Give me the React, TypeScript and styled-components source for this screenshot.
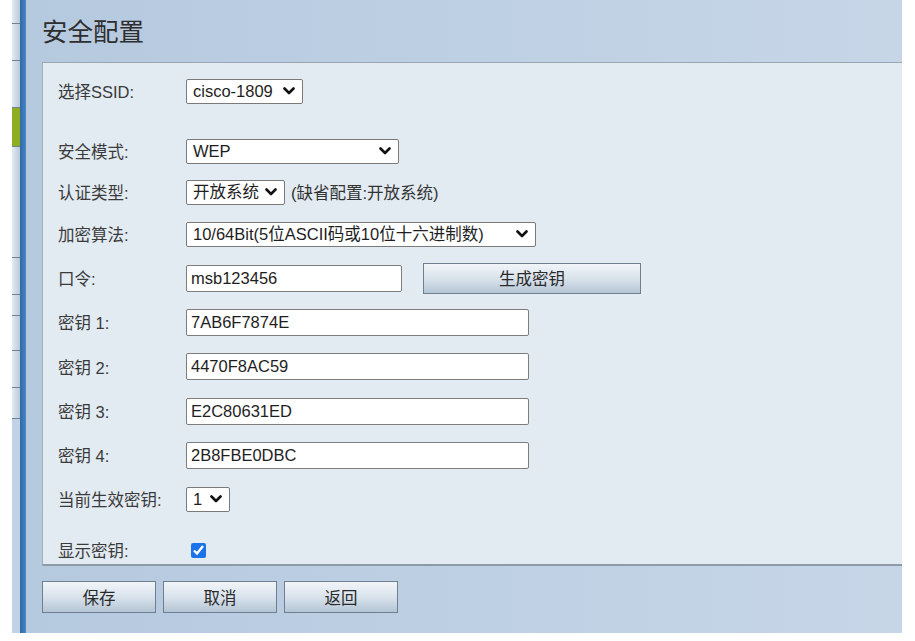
import styled, { createGlobalStyle } from "styled-components"

const GlobalStyle = createGlobalStyle`
  html, body {
    margin: 0;
    padding: 0;
    background: #ffffff;
  }
  body {
    font-family: "Liberation Sans", "Noto Sans CJK SC", sans-serif;
    color: #333333;
  }
`

const chevron = encodeURIComponent(
  `<svg xmlns="http://www.w3.org/2000/svg" width="12" height="8" viewBox="0 0 12 8"><path d="M1.5 1.5 L6 6 L10.5 1.5" fill="none" stroke="#111" stroke-width="2.6" stroke-linecap="round" stroke-linejoin="round"/></svg>`
)

const sideItems: { height: number; active?: boolean }[] = [
  { height: 23 },
  { height: 36 },
  { height: 46 },
  { height: 38, active: true },
  { height: 110 },
  { height: 36 },
  { height: 20 },
  { height: 34 },
  { height: 36 },
  { height: 30 },
  { height: 40 }
]

const FormRow = ({
  label,
  height,
  children
}: {
  label: string
  height: number
  children?: React.ReactNode
}) => {
  return (
    <Row height={height}>
      <Label>{label}</Label>
      <Field>{children}</Field>
    </Row>
  )
}

export default function App() {
  return (
    <>
      <GlobalStyle />
      <Page>
        <Gutter />
        <SideStrip>
          {sideItems.map((item, i) => (
            <SideItem key={i} height={item.height} active={item.active} />
          ))}
        </SideStrip>
        <BlueBar />
        <Main>
          <Title>安全配置</Title>
          <Panel>
            <FormRow label="选择SSID:" height={46}>
              <Select width={117} defaultValue="cisco-1809">
                <option>cisco-1809</option>
              </Select>
            </FormRow>
            <Divider />
            <FormRow label="安全模式:" height={42}>
              <Select width={213} defaultValue="WEP">
                <option>WEP</option>
              </Select>
            </FormRow>
            <FormRow label="认证类型:" height={40}>
              <Select width={99} defaultValue="开放系统">
                <option>开放系统</option>
              </Select>
              <Hint>(缺省配置:开放系统)</Hint>
            </FormRow>
            <FormRow label="加密算法:" height={44}>
              <Select width={350} defaultValue="a">
                <option value="a">10/64Bit(5位ASCII码或10位十六进制数)</option>
              </Select>
            </FormRow>
            <FormRow label="口令:" height={44}>
              <TextInput width={216} defaultValue="msb123456" />
              <GenerateButton>生成密钥</GenerateButton>
            </FormRow>
            <FormRow label="密钥 1:" height={44}>
              <TextInput width={343} defaultValue="7AB6F7874E" />
            </FormRow>
            <FormRow label="密钥 2:" height={45}>
              <TextInput width={343} defaultValue="4470F8AC59" />
            </FormRow>
            <FormRow label="密钥 3:" height={44}>
              <TextInput width={343} defaultValue="E2C80631ED" />
            </FormRow>
            <FormRow label="密钥 4:" height={44}>
              <TextInput width={343} defaultValue="2B8FBE0DBC" />
            </FormRow>
            <FormRow label="当前生效密钥:" height={44}>
              <Select width={44} defaultValue="1">
                <option>1</option>
              </Select>
            </FormRow>
            <Spacer />
            <FormRow label="显示密钥:" height={32}>
              <CheckBox type="checkbox" defaultChecked />
            </FormRow>
          </Panel>
          <ButtonBar>
            <ActionButton>保存</ActionButton>
            <ActionButton>取消</ActionButton>
            <ActionButton>返回</ActionButton>
          </ButtonBar>
        </Main>
      </Page>
    </>
  )
}

const Page = styled.div`
  display: flex;
  width: 915px;
  height: 633px;
`

const Gutter = styled.div`
  width: 12px;
  flex-shrink: 0;
  background: #ffffff;
`

const SideStrip = styled.div`
  width: 8px;
  flex-shrink: 0;
  display: flex;
  flex-direction: column;
  background: #c9d6e2;
`

const SideItem = styled.div<{ height: number; active?: boolean }>`
  height: ${(props) => props.height}px;
  flex-shrink: 0;
  border-bottom: 1px solid #6f8196;
  background: ${(props) =>
    props.active
      ? "#8fae1f"
      : "linear-gradient(to right, #e4ecf3, #b9c9d9)"};
  &:last-child {
    flex: 1;
    border-bottom: none;
    background: #c0d2e5;
  }
`

const BlueBar = styled.div`
  width: 6px;
  flex-shrink: 0;
  background: linear-gradient(to right, #2f6aa8, #4a86c2);
`

const Main = styled.div`
  width: 876px;
  flex-shrink: 0;
  display: flex;
  flex-direction: column;
  padding-left: 16px;
  box-sizing: border-box;
  background: linear-gradient(to right, #b5c9df, #c6d6e7);
`

const Title = styled.h1`
  margin: 0;
  padding: 17px 0 14px;
  font-size: 25.5px;
  line-height: 31px;
  font-weight: 400;
  color: #2e2e2e;
`

const Panel = styled.div`
  display: flex;
  flex-direction: column;
  padding: 5px 0 0 15px;
  background: #e2eaf2;
  border-top: 1px solid #9aa6b2;
  border-left: 1px solid #a4afbb;
  border-bottom: 2px solid #8e9aa6;
  height: 504px;
  box-sizing: border-box;
`

const Row = styled.div<{ height: number }>`
  display: flex;
  align-items: center;
  height: ${(props) => props.height}px;
  flex-shrink: 0;
`

const Label = styled.span`
  width: 128px;
  flex-shrink: 0;
  font-size: 16.5px;
  color: #3a3a3a;
`

const Field = styled.div`
  display: flex;
  align-items: center;
  column-gap: 21px;
`

const Divider = styled.div`
  height: 2px;
  background: #c9cfe8;
  margin-top: 2px;
  margin-bottom: 14px;
`

const Spacer = styled.div`
  height: 13px;
  flex-shrink: 0;
`

const Select = styled.select<{ width: number }>`
  appearance: none;
  width: ${(props) => props.width}px;
  height: 25px;
  box-sizing: border-box;
  padding: 0 20px 0 6px;
  border: 1px solid #7a7a7a;
  border-radius: 2px;
  background: #ffffff url("data:image/svg+xml,${chevron}") no-repeat
    right 7px center;
  font-family: "Liberation Sans", "Noto Sans CJK SC", sans-serif;
  font-size: 16.5px;
  color: #1e1e1e;
`

const Hint = styled.span`
  margin-left: -15px;
  font-size: 16.5px;
  color: #333333;
`

const TextInput = styled.input<{ width: number }>`
  width: ${(props) => props.width}px;
  height: 27px;
  box-sizing: border-box;
  padding: 0 4px;
  border: 1px solid #7d7d7d;
  border-radius: 2px;
  background: #ffffff;
  font-family: "Liberation Sans", "Noto Sans CJK SC", sans-serif;
  font-size: 16.5px;
  color: #1e1e1e;
  outline: none;
`

const buttonLook = `
  box-sizing: border-box;
  border: 1px solid #6f7f8f;
  background: linear-gradient(to bottom, #f1f5f9 0%, #d9e3ec 50%, #b5c5d5 100%);
  font-family: "Liberation Sans", "Noto Sans CJK SC", sans-serif;
  font-size: 16.5px;
  color: #2a2a2a;
  padding: 0;
`

const GenerateButton = styled.button`
  ${buttonLook}
  width: 218px;
  height: 31px;
`

const ButtonBar = styled.div`
  display: flex;
  column-gap: 7px;
  padding-top: 15px;
`

const ActionButton = styled.button`
  ${buttonLook}
  width: 114px;
  height: 32px;
`

const CheckBox = styled.input`
  width: 15px;
  height: 15px;
  margin: 0 0 0 5px;
  accent-color: #1a73e8;
`
